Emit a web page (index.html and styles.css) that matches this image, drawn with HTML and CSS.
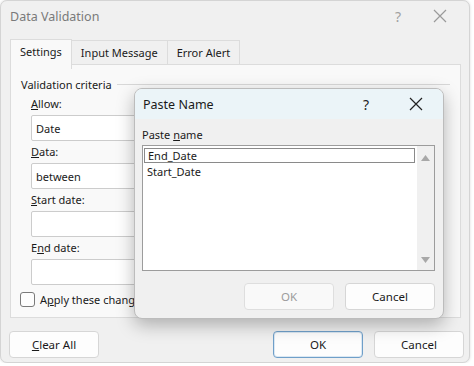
FILE: index.html
```html
<!DOCTYPE html>
<html lang="en">
<head>
    <meta charset="UTF-8">
    <title>Data Validation</title>
    <link rel="stylesheet" href="styles.css">
</head>
<body>
    <div class="window">
        <div class="titlebar">
            <span class="title">Data Validation</span>
            <span class="help">?</span>
            <svg class="close" width="14" height="14" viewBox="0 0 14 14"><path d="M1 1L13 13M13 1L1 13" stroke="#9a9a9a" stroke-width="1.2" fill="none"/></svg>
        </div>

        <div class="tabs">
            <div class="tab active">Settings</div>
            <div class="tab">Input Message</div>
            <div class="tab">Error Alert</div>
        </div>

        <div class="panel">
            <div class="group-title"><span>Validation criteria</span><div class="line"></div></div>
            <div class="fields">
                <label><u>A</u>llow:</label>
                <div class="field">Date</div>
                <label><u>D</u>ata:</label>
                <div class="field">between</div>
                <label><u>S</u>tart date:</label>
                <div class="field"></div>
                <label>E<u>n</u>d date:</label>
                <div class="field"></div>
            </div>
            <div class="check">
                <span class="box"></span>
                <span>A<u>p</u>ply these changes</span>
            </div>
        </div>

        <div class="footer">
            <button class="btn"><u>C</u>lear All</button>
            <div class="spacer"></div>
            <button class="btn primary">OK</button>
            <button class="btn">Cancel</button>
        </div>

        <!-- child dialog sitting over the main one -->
        <div class="popup">
            <div class="popup-title">
                <span class="title">Paste Name</span>
                <span class="help">?</span>
                <svg class="close" width="14" height="14" viewBox="0 0 14 14"><path d="M1 1L13 13M13 1L1 13" stroke="#222" stroke-width="1.2" fill="none"/></svg>
            </div>
            <div class="popup-body">
                <div class="list-label">Paste <u>n</u>ame</div>
                <div class="list">
                    <div class="items">
                        <div class="item focused">End_Date</div>
                        <div class="item">Start_Date</div>
                    </div>
                    <div class="scroll">
                        <svg width="9" height="6" viewBox="0 0 9 6"><path d="M0 6L4.5 0L9 6Z" fill="#a8a8a8"/></svg>
                        <svg width="9" height="6" viewBox="0 0 9 6"><path d="M0 0L4.5 6L9 0Z" fill="#a8a8a8"/></svg>
                    </div>
                </div>
                <div class="popup-buttons">
                    <button class="btn disabled">OK</button>
                    <button class="btn">Cancel</button>
                </div>
            </div>
        </div>
    </div>
</body>
</html>
```

FILE: styles.css
```css
body {
    margin: 0;
    background: #ffffff;
    font-family: 'Noto Sans', 'Open Sans', sans-serif;
    font-size: 11px;
    color: #1a1a1a;
    overflow: hidden;
}

.window {
    position: relative;
    width: 468px;
    height: 361px;
    background: #f0f0f0;
    border: 1px solid #d4d4d4;
    border-radius: 7px;
    box-shadow: 0 0 3px rgba(0,0,0,0.15);
}

.titlebar {
    display: flex;
    align-items: center;
    height: 30px;
    padding-left: 9px;
    color: #7a7a7a;
}

.titlebar .title {
    flex: 1;
    font-size: 12.5px;
}

.titlebar .help {
    font-size: 14px;
    margin-right: 32px;
    color: #a0a0a0;
}

.titlebar .close {
    margin-right: 22px;
}

.tabs {
    display: flex;
    margin-top: 9px;
    padding-left: 9px;
    height: 24px;
}

.tab {
    padding: 4px 9px 0 9px;
    border: 1px solid #dcdcdc;
    border-bottom: none;
    border-left: none;
    background: #f0f0f0;
    color: #1a1a1a;
}

.tab.active {
    background: #f9f9f9;
    border-left: 1px solid #dcdcdc;
    height: 25px;
    margin-top: -1px;
    position: relative;
    z-index: 1;
}

.panel {
    margin-left: 9px;
    width: 451px;
    height: 254px;
    background: #f9f9f9;
    border: 1px solid #dcdcdc;
    box-sizing: border-box;
    padding: 11px 10px 0 10px;
}

.group-title {
    display: flex;
    align-items: center;
    height: 17px;
}

.group-title .line {
    flex: 1;
    height: 1px;
    background: #d8d8d8;
    margin-left: 5px;
}

.fields {
    padding-left: 10px;
    width: 200px;
}

.fields label {
    display: block;
    height: 14px;
    margin-top: 3px;
    margin-bottom: 5px;
    color: #1a1a1a;
}

.field {
    height: 26px;
    border: 1px solid #cccccc;
    border-radius: 2px;
    background: #ffffff;
    box-sizing: border-box;
    padding: 5px 4px 0 4px;
}

.check {
    display: flex;
    align-items: center;
    margin-top: 7px;
    margin-left: -1px;
}

.check .box {
    width: 13px;
    height: 13px;
    border: 1px solid #7a7a7a;
    border-radius: 3px;
    background: #fdfdfd;
    margin-right: 5px;
}

.footer {
    display: flex;
    align-items: center;
    padding: 13px 5px 0 8px;
}

.spacer {
    flex: 1;
}

.btn {
    width: 90px;
    height: 27px;
    background: #fdfdfd;
    border: 1px solid #d6d6d6;
    border-radius: 4px;
    font-family: inherit;
    font-size: 11.5px;
    color: #1a1a1a;
    padding: 0;
}

.footer .btn + .btn {
    margin-left: 11px;
}

.btn.primary {
    border: 1px solid #6f9fc9;
    box-shadow: inset 0 0 0 1px #dbe8f3;
}

.btn.disabled {
    color: #9c9c9c;
    background: #f9f9f9;
    border-color: #dedede;
}

.popup {
    position: absolute;
    left: 133px;
    top: 87px;
    width: 308px;
    height: 229px;
    background: #f0f0f0;
    border: 1px solid #bcbcbc;
    border-radius: 8px;
    overflow: hidden;
    box-shadow: 0 6px 18px rgba(0,0,0,0.28);
}

.popup-title {
    display: flex;
    align-items: center;
    height: 30px;
    padding-left: 8px;
    background: #ebf4f8;
}

.popup-title .title {
    flex: 1;
    font-size: 12.5px;
    color: #1a1a1a;
}

.popup-title .help {
    font-size: 14px;
    margin-right: 40px;
    color: #222;
}

.popup-title .close {
    margin-right: 20px;
}

.popup-body {
    padding: 8px 8px 0 7px;
}

.list-label {
    height: 15px;
}

.list {
    display: flex;
    margin-top: 3px;
    height: 126px;
    border: 1px solid #9c9c9c;
    background: #ffffff;
    box-sizing: border-box;
}

.items {
    flex: 1;
    padding: 2px 2px 0 1px;
}

.item {
    height: 15px;
    line-height: 14px;
    padding-left: 3px;
    margin-bottom: 2px;
}

.item.focused {
    border: 1px solid #8a8a8a;
    line-height: 13px;
    height: 13px;
}

.scroll {
    width: 17px;
    background: #f0f0f0;
    display: flex;
    flex-direction: column;
    align-items: center;
    justify-content: space-between;
    padding: 9px 0 7px;
}

.popup-buttons {
    display: flex;
    justify-content: flex-end;
    margin-top: 12px;
}

.popup-buttons .btn + .btn {
    margin-left: 11px;
}
```
